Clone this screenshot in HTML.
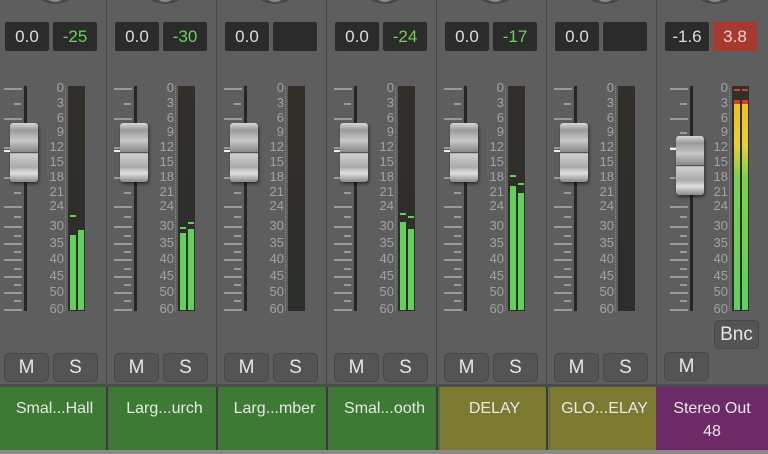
<!DOCTYPE html>
<html><head><meta charset="utf-8"><style>
*{margin:0;padding:0;box-sizing:border-box}
body{width:768px;height:454px;background:#5e5e5e;overflow:hidden;position:relative;font-family:"Liberation Sans",sans-serif}
.a{position:absolute}
.disp{position:absolute;top:22px;height:29px;width:44px;background:#2b2b2b;border-radius:2px;color:#ddd;font-size:17px;text-align:center;line-height:29px}
.btn{position:absolute;height:29px;width:45px;background:#545454;border:1px solid #474747;border-radius:5px;color:#e6e6e6;font-size:19px;text-align:center;line-height:27px}
.lbl{position:absolute;font-size:13px;color:#a2a2a2;text-align:right;width:22px}
.name{position:absolute;top:387px;height:63px;color:#e8e8e8;font-size:16px;text-align:center;padding-top:13px}
.cap{position:absolute;width:28px;height:59px;border-radius:3px;background:linear-gradient(#d8d8d8,#9a9a9a 12%,#c8c8c8 30%,#888 49%,#333 50%,#d0d0d0 52%,#aaa 75%,#e0e0e0 85%,#8a8a8a);box-shadow:1px 2px 3px rgba(0,0,0,.5)}
</style></head><body>
<div class="a" style="left:0;top:450px;width:768px;height:4px;background:#8a8a8a"></div>
<div id="root"></div>
<script>
var H='';
var labels=[[0,88],[3,103],[6,118],[9,132],[12,147],[15,162],[18,177],[21,192],[24,206],[30,226],[35,243],[40,259],[45,276],[50,292],[60,309]];
var ch=[
 {v:'-25',n:'Smal...Hall',c:'#3d7a34',m:[235,230],p:[215,0]},
 {v:'-30',n:'Larg...urch',c:'#3d7a34',m:[233,229],p:[227,222]},
 {v:'',n:'Larg...mber',c:'#3d7a34',m:null},
 {v:'-24',n:'Smal...ooth',c:'#3d7a34',m:[222,229],p:[213,216]},
 {v:'-17',n:'DELAY',c:'#7c7a31',m:[186,193],p:[175,183]},
 {v:'',n:'GLO...ELAY',c:'#7c7a31',m:null},
 {v:'3.8',n:'Stereo Out<br>48',c:'#6c2a66',m:[104,104],st:1}
];
var ticks=[88,103,118,132,147,162,177,192,206,216,226,235,243,251,259,268,276,284,292,300,309];
ch.forEach(function(c,k){
 var x=k*110;
 H+='<div class="a" style="left:'+(x+35)+'px;top:-22px;width:40px;height:26px;border-radius:50%;background:#4a4a4a"></div><div class="a" style="left:'+(x+44)+'px;top:-20px;width:22px;height:22px;border-radius:50%;background:#8a8a8a"></div>';
 if(k>0)H+='<div class="a" style="left:'+(x-4)+'px;top:0;width:1px;height:387px;background:#464646"></div>';
 var st=c.st;
 H+='<div class="disp" style="left:'+(x+5)+'px">'+(st?'-1.6':'0.0')+'</div>';
 H+='<div class="disp" style="left:'+(x+53)+'px;color:'+(st?'#f0d0d0':'#6fd05c')+';background:'+(st?'#a8392f':'#2b2b2b')+'">'+c.v+'</div>';
 var fx=st?x+6:x;
 H+='<div class="a" style="left:'+(fx+24)+'px;top:86px;width:3px;height:225px;background:#262626"></div>';
 ticks.forEach(function(t,i){var big=(i%2==0);H+='<div class="a" style="left:'+(fx+(big?4:14))+'px;top:'+t+'px;width:'+(big?18:7)+'px;height:2px;background:#9a9a9a"></div>';});
 var cy=st?136:123;
 H+='<div class="cap" style="left:'+(fx+10)+'px;top:'+cy+'px"></div>';
 H+='<div class="a" style="left:'+(fx+4)+'px;top:'+(st?148:150)+'px;width:6px;height:2px;background:#eee"></div>';
 var mx=st?x+4:x;
 labels.forEach(function(l){H+='<div class="lbl" style="left:'+(mx+42)+'px;top:'+(l[1]-8)+'px">'+l[0]+'</div>';});
 H+='<div class="a" style="left:'+(mx+65)+'px;top:86px;width:1px;height:225px;border-left:1px dotted #8a8a8a"></div>';
 H+='<div class="a" style="left:'+(mx+68)+'px;top:86px;width:17px;height:225px;background:linear-gradient(#332f2a,#2b2e2b)"></div>';
 if(c.m){[0,1].forEach(function(j){var bx=mx+70+j*8,t=c.m[j];
  var bg=st?'linear-gradient(#f0c020,#e8d030 20%,#7cd050 35%,#5fd060)':'#64d05c';
  H+='<div class="a" style="left:'+bx+'px;top:'+t+'px;width:6px;height:'+(310-t)+'px;background:'+bg+'"></div>';
  if(st){H+='<div class="a" style="left:'+bx+'px;top:100px;width:6px;height:4px;background:#d04030"></div><div class="a" style="left:'+bx+'px;top:89px;width:6px;height:2px;background:#d04030"></div>';}
  else if(c.p[j])H+='<div class="a" style="left:'+bx+'px;top:'+c.p[j]+'px;width:6px;height:2px;background:#64d05c"></div>';
 });}
 if(st){H+='<div class="btn" style="left:714px;top:320px">Bnc</div><div class="btn" style="left:664px;top:352px">M</div>';}
 else{H+='<div class="btn" style="left:'+(x+4)+'px;top:353px">M</div><div class="btn" style="left:'+(x+53)+'px;top:353px">S</div>';}
 var w=k==6?112:109;
 H+='<div class="name" style="left:'+(k==6?656:x)+'px;width:'+w+'px;background:'+c.c+';'+(st?'padding-top:10px;line-height:23px':'')+'">'+c.n+'</div>';
 if(k<6)H+='<div class="a" style="left:'+(x+106)+'px;top:387px;width:2px;height:63px;background:#3a3a3a"></div>';
});
H+='<div class="a" style="left:0;top:384px;width:768px;height:3px;background:#4c4c4c"></div>';
document.getElementById('root').innerHTML=H;
</script>
</body></html>
